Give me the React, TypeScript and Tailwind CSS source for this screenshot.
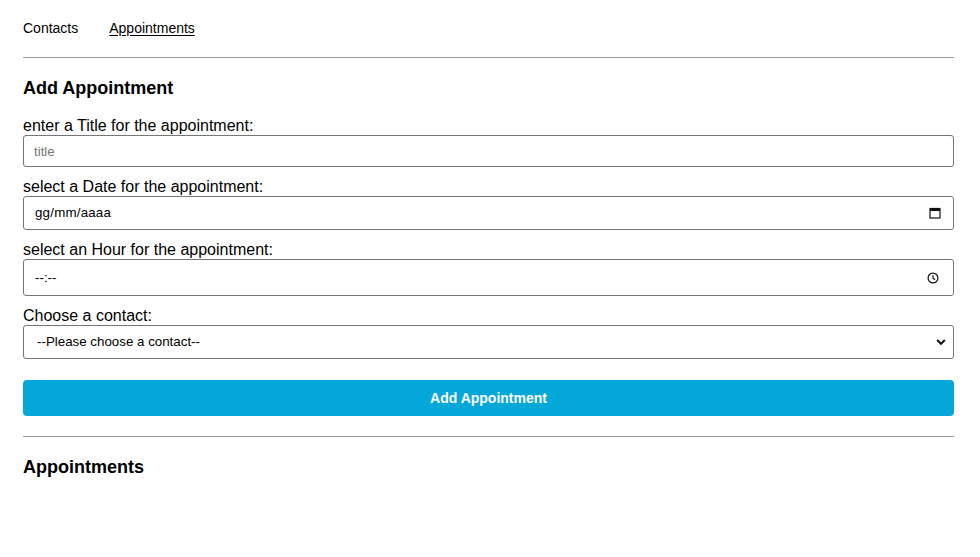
import React from "react";

const fieldBox =
    "w-full rounded-[3px] border border-[#767676] bg-white flex items-center text-[13.33px] text-black";

const labelCls = "text-[16px] leading-[19px]";

function CalendarIcon() {
    return (
        <svg width="12" height="12" viewBox="0 0 12 12" className="shrink-0">
            <rect x="1" y="1.5" width="10" height="9.5" fill="none" stroke="#111" strokeWidth="1.2" />
            <rect x="1" y="1.5" width="10" height="2.5" fill="#111" />
        </svg>
    );
}

function ClockIcon() {
    return (
        <svg width="12" height="12" viewBox="0 0 12 12" className="shrink-0">
            <circle cx="6" cy="6" r="4.9" fill="none" stroke="#111" strokeWidth="1.2" />
            <path d="M6 3.2V6.2L8 7.8" fill="none" stroke="#111" strokeWidth="1.2" />
        </svg>
    );
}

function ChevronIcon() {
    return (
        <svg width="10" height="8" viewBox="0 0 10 8" className="shrink-0">
            <path d="M1.2 2L5 5.8L8.8 2" fill="none" stroke="#111" strokeWidth="2" />
        </svg>
    );
}

export default function App() {
    return (
        <div className="min-h-[557px] bg-white pl-[23px] pr-[26px] pt-5 text-black" style={{ fontFamily: '"Liberation Sans", Arial, sans-serif' }}>
            <nav className="flex gap-[31px] text-[14px] leading-4">
                <a className="cursor-pointer">Contacts</a>
                <a className="cursor-pointer underline underline-offset-2">Appointments</a>
            </nav>
            <hr className="mt-[21px] border-0 border-t border-[#9b9b9b]" />

            <h2 className="mt-[19px] text-[18px] font-bold leading-[22px]">Add Appointment</h2>

            <form className="mt-[17px] flex flex-col" onSubmit={(e) => e.preventDefault()}>
                <label className={labelCls}>enter a Title for the appointment:</label>
                <input
                    type="text"
                    placeholder="title"
                    className={`${fieldBox} h-8 px-[10px] outline-none placeholder:text-[#757575]`}
                    style={{ fontFamily: '"Liberation Sans", Arial, sans-serif' }}
                />

                <label className={`mt-[10px] ${labelCls}`}>select a Date for the appointment:</label>
                <div className={`${fieldBox} h-[34px] pl-[11px] pr-[12px] justify-between`}>
                    <span className="tracking-[0.2px]">gg/mm/aaaa</span>
                    <CalendarIcon />
                </div>

                <label className={`mt-[10px] ${labelCls}`}>select an Hour for the appointment:</label>
                <div className={`${fieldBox} h-[37px] pl-[11px] pr-[14px] justify-between`}>
                    <span>--:--</span>
                    <ClockIcon />
                </div>

                <label className={`mt-[10px] ${labelCls}`}>Choose a contact:</label>
                <div className={`${fieldBox} h-[34px] pl-[13px] pr-[7px] justify-between`}>
                    <span>--Please choose a contact--</span>
                    <ChevronIcon />
                </div>

                <button
                    type="submit"
                    className="mt-[21px] h-[36px] w-full rounded-[4px] bg-[#04a8d8] text-[14px] font-bold text-white"
                >
                    Add Appointment
                </button>
            </form>

            <hr className="mt-[20px] border-0 border-t border-[#9b9b9b]" />

            <h2 className="mt-[19px] text-[18px] font-bold leading-[22px]">Appointments</h2>
        </div>
    );
}
